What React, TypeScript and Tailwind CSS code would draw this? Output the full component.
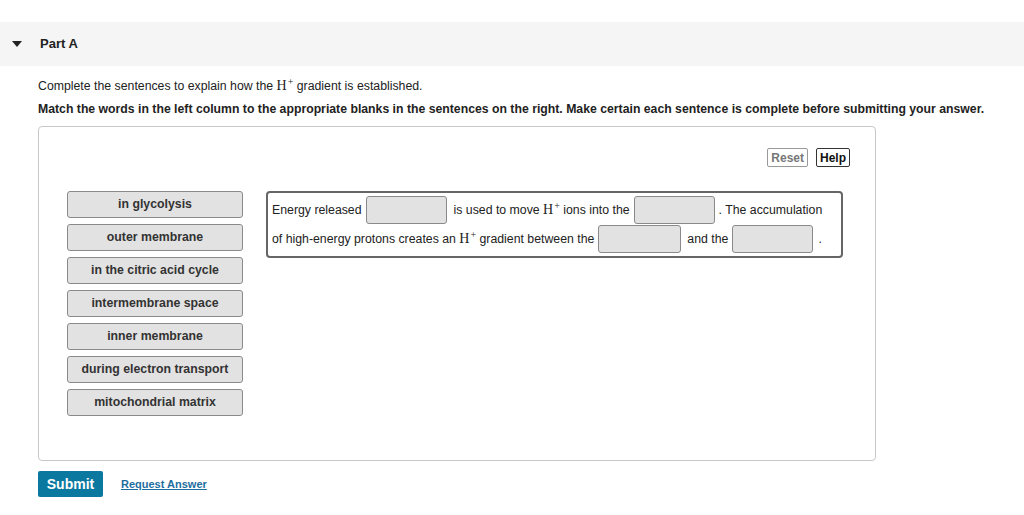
import React from 'react'

const words = [
  'in glycolysis',
  'outer membrane',
  'in the citric acid cycle',
  'intermembrane space',
  'inner membrane',
  'during electron transport',
  'mitochondrial matrix',
]

const Hplus = () => (
  <span className="font-['Liberation_Serif',serif] text-[14px] leading-none">
    H<span className="text-[10px] relative -top-[5px] ml-[1px]">+</span>
  </span>
)

const Blank = ({ w = 'w-[81px]' }: { w?: string }) => (
  <span className={`inline-block align-middle h-[28px] ${w} bg-[#e2e2e2] border border-[#8a8a8a] rounded-[3px]`} />
)

export default function App() {
  return (
    <div className="w-[1024px] h-[515px] bg-white font-['Liberation_Sans',Arial,sans-serif] text-[#222] overflow-hidden">
      <div className="h-[22px]" />
      <div className="h-[44px] bg-[#f5f5f5] flex items-center">
        <svg width="10" height="6" viewBox="0 0 10 6" className="ml-[12px]">
          <path d="M0 0 L10 0 L5 6 Z" fill="#222" />
        </svg>
        <span className="ml-[18px] text-[13px] font-bold">Part A</span>
      </div>

      <div className="pl-[38px] pr-[20px]">
        <p className="mt-[13px] text-[12.3px] leading-[15px]">
          Complete the sentences to explain how the <Hplus /> gradient is established.
        </p>
        <p className="mt-[8px] text-[12.25px] font-bold leading-[15px] whitespace-nowrap">
          Match the words in the left column to the appropriate blanks in the sentences on the right. Make certain each sentence is complete before submitting your answer.
        </p>

        <div className="mt-[9px] w-[838px] h-[335px] border border-[#c8c8c8] rounded-[4px] px-[28px] pt-[21px]">
          <div className="flex justify-end gap-[8px] mr-[-3px]">
            <button className="h-[19px] px-[3px] text-[12px] font-bold leading-none text-[#777] border border-[#999] rounded-[2px] bg-white">
              Reset
            </button>
            <button className="h-[19px] px-[3px] text-[12px] font-bold leading-none text-[#111] border border-[#333] rounded-[2px] bg-white">
              Help
            </button>
          </div>

          <div className="mt-[24px] flex gap-[23px]">
            <div className="flex flex-col gap-[6px]">
              {words.map((w) => (
                <div
                  key={w}
                  className="w-[176px] h-[27px] flex items-center justify-center bg-[#e2e2e2] border border-[#8a8a8a] rounded-[3px] text-[12.3px] font-bold text-[#333]"
                >
                  {w}
                </div>
              ))}
            </div>

            <div className="w-[577px] h-[67px] border-2 border-[#666] rounded-[4px] pl-[4px] pt-[3px] text-[12.3px] text-[#222] whitespace-nowrap">
              <div className="flex items-center h-[28px]">
                <span>Energy released</span>
                <span className="ml-[4px]"><Blank /></span>
                <span className="ml-[7px]">is used to move <Hplus /> ions into the</span>
                <span className="ml-[4px]"><Blank /></span>
                <span className="ml-[4px]">. The accumulation</span>
              </div>
              <div className="flex items-center h-[28px] mt-[1px]">
                <span>of high-energy protons creates an <Hplus /> gradient between the</span>
                <span className="ml-[4px]"><Blank w="w-[83px]" /></span>
                <span className="ml-[6px]">and the</span>
                <span className="ml-[4px]"><Blank /></span>
                <span className="ml-[5px]">.</span>
              </div>
            </div>
          </div>
        </div>

        <div className="mt-[10px] flex items-center">
          <button className="w-[65px] h-[26px] bg-[#0b78a0] text-white text-[14px] font-bold rounded-[2px]">
            Submit
          </button>
          <a href="#" className="ml-[18px] text-[11px] font-bold text-[#1c6e9e] underline">
            Request Answer
          </a>
        </div>
      </div>
    </div>
  )
}
